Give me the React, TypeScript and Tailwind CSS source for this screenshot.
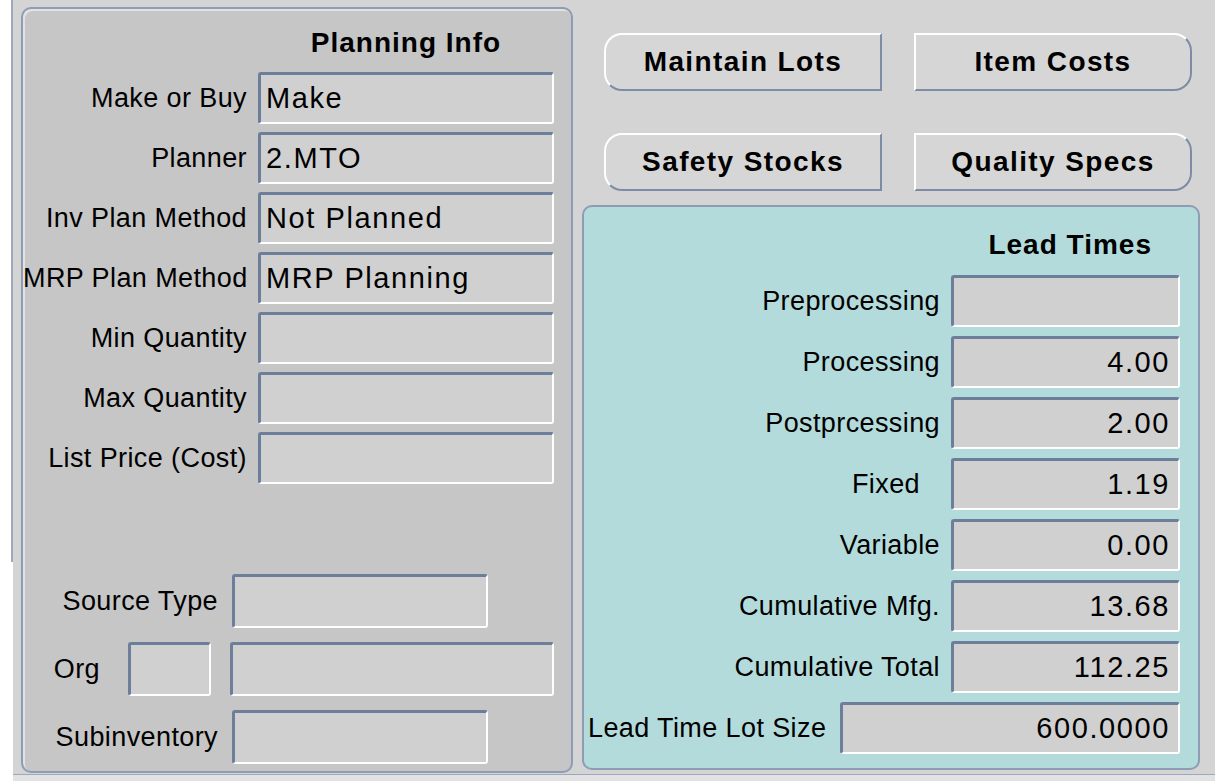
import React from "react";

const labelCls = "text-[27px] tracking-[0.4px] text-black text-right whitespace-nowrap leading-none";

function Field({ value, className = "", right = false }: { value?: string; className?: string; right?: boolean }) {
  return (
    <div
      className={`h-[52px] bg-[#d0d0d0] border-t-[3px] border-l-[3px] border-b-2 border-r-2 border-t-[#6d7e9b] border-l-[#6d7e9b] border-b-white border-r-white rounded-[3px] flex items-center pl-[5px] pr-[8px] text-[29px] tracking-[1.6px] text-black leading-none ${
        right ? "justify-end" : ""
      } ${className}`}
    >
      {value}
    </div>
  );
}

function Btn({ label, side }: { label: string; side: "l" | "r" }) {
  return (
    <button
      className={`w-[278px] h-[58px] bg-[#d6d6d6] border-2 border-t-white border-l-white border-b-[#7d8ca6] border-r-[#7d8ca6] ${
        side === "l" ? "rounded-l-[18px]" : "rounded-r-[18px]"
      } font-bold text-[28px] tracking-[1.4px] text-black`}
    >
      {label}
    </button>
  );
}

export default function App() {
  const planning = [
    { label: "Make or Buy", value: "Make" },
    { label: "Planner", value: "2.MTO" },
    { label: "Inv Plan Method", value: "Not Planned" },
    { label: "MRP Plan Method", value: "MRP Planning" },
    { label: "Min Quantity", value: "" },
    { label: "Max Quantity", value: "" },
    { label: "List Price (Cost)", value: "" },
  ];

  const leadTimes = [
    { label: "Preprocessing", value: "" },
    { label: "Processing", value: "4.00" },
    { label: "Postprcessing", value: "2.00" },
    { label: "Fixed", value: "1.19", pad: true },
    { label: "Variable", value: "0.00" },
    { label: "Cumulative Mfg.", value: "13.68" },
    { label: "Cumulative Total", value: "112.25" },
  ];

  return (
    <div className="w-[1215px] h-[781px] flex bg-[#d4d4d4] font-['Liberation_Sans',Arial,sans-serif] overflow-hidden">
      {/* left edge strip */}
      <div className="w-[13px] flex flex-col bg-white">
        <div className="h-[562px] border-r-2 border-[#9ba8c0]" />
      </div>

      <div className="flex-1 flex flex-col">
        <div className="flex h-[774px] pt-[7px] pl-[8px] gap-[9px]">
          {/* Planning Info panel */}
          <div className="w-[552px] h-[766px] bg-[#c6c6c6] border-2 border-[#8e9cb5] rounded-[10px] shadow-[inset_2px_2px_0_#e2e2e2] flex flex-col pt-[18px] pr-[17px]">
            <div className="flex">
              <div className="w-[235px]" />
              <div className="flex-1 text-center font-bold text-[28px] tracking-[1px] leading-none pt-[2px] h-[45px]">
                Planning Info
              </div>
            </div>
            <div className="flex flex-col gap-[8px]">
              {planning.map((r) => (
                <div key={r.label} className="flex items-center gap-[11px]">
                  <div className={`w-[224px] ${labelCls}`}>{r.label}</div>
                  <Field value={r.value} className="flex-1" />
                </div>
              ))}
            </div>

            <div className="flex flex-col gap-[14px] mt-[90px]">
              <div className="flex items-center gap-[14px]">
                <div className={`w-[195px] ${labelCls}`}>Source Type</div>
                <Field className="w-[256px] h-[54px]" />
              </div>
              <div className="flex items-center">
                <div className={`w-[77px] ${labelCls}`}>Org</div>
                <Field className="w-[83px] ml-[28px] h-[54px]" />
                <Field className="flex-1 ml-[19px] h-[54px]" />
              </div>
              <div className="flex items-center gap-[14px]">
                <div className={`w-[195px] ${labelCls}`}>Subinventory</div>
                <Field className="w-[256px] h-[54px]" />
              </div>
            </div>
          </div>

          {/* right column */}
          <div className="w-[618px] flex flex-col">
            <div className="flex flex-col gap-[42px] pt-[26px] pl-[22px]">
              <div className="flex gap-[32px]">
                <Btn label="Maintain Lots" side="l" />
                <Btn label="Item Costs" side="r" />
              </div>
              <div className="flex gap-[32px]">
                <Btn label="Safety Stocks" side="l" />
                <Btn label="Quality Specs" side="r" />
              </div>
            </div>

            {/* Lead Times panel */}
            <div className="mt-[14px] h-[565px] bg-[#b4dbdb] border-2 border-[#8e9cb5] rounded-[10px] flex flex-col pt-[20px] pr-[18px] pl-[4px]">
              <div className="text-right font-bold text-[28px] tracking-[1px] leading-none pr-[28px] h-[48px] pt-[4px]">
                Lead Times
              </div>
              <div className="flex flex-col gap-[9px]">
                {leadTimes.map((r) => (
                  <div key={r.label} className="flex items-center gap-[11px]">
                    <div className={`flex-1 ${labelCls} ${r.pad ? "pr-[20px]" : ""}`}>{r.label}</div>
                    <Field value={r.value} right className="w-[229px]" />
                  </div>
                ))}
                <div className="flex items-center gap-[14px]">
                  <div className={`${labelCls} text-left`}>Lead Time Lot Size</div>
                  <Field value="600.0000" right className="flex-1" />
                </div>
              </div>
            </div>
          </div>
        </div>
        <div className="flex-1 bg-[#e2e2e2] border-t border-[#9ba8c0]" />
      </div>
    </div>
  );
}
